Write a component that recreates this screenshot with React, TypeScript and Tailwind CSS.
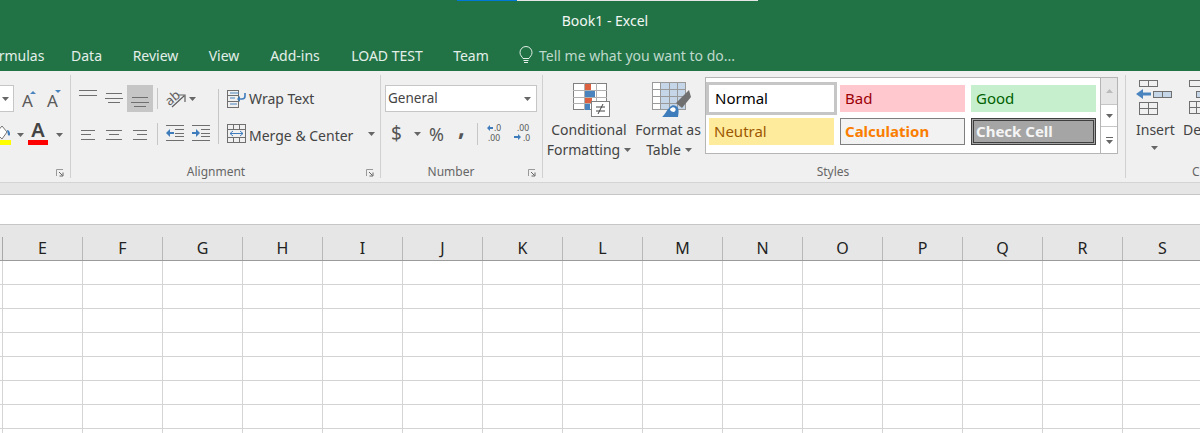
const tabs = [
  { label: 'Formulas', className: 'ml-[-17px] w-[59px]' },
  { label: 'Data', className: 'ml-[29px] w-[31px]' },
  { label: 'Review', className: 'ml-[30px] w-[47px]' },
  { label: 'View', className: 'ml-[29px] w-[32px]' },
  { label: 'Add-ins', className: 'ml-[29px] w-[52px]' },
  { label: 'LOAD TEST', className: 'ml-[29px] w-[74px]' },
  { label: 'Team', className: 'ml-[29px] w-[36px]' },
];

const columns = ['E', 'F', 'G', 'H', 'I', 'J', 'K', 'L', 'M', 'N', 'O', 'P', 'Q', 'R', 'S'];
const rows = [1, 2, 3, 4, 5, 6, 7, 8];

function Caret({ className = '' }: { className?: string }) {
  return (
    <svg width="7" height="4" className={`shrink-0 ${className}`}>
      <path d="M0 0h7L3.5 4z" fill="#666" />
    </svg>
  );
}

function Launcher() {
  return (
    <svg width="8" height="8" className="shrink-0">
      <path d="M0.5 7V0.5H7" fill="none" stroke="#999" />
      <path d="M3 3l3.5 3.5M7 3.5V7H3.5" fill="none" stroke="#666" />
    </svg>
  );
}

function Lines({ lines, width = 18, height = 18 }: { lines: number[][]; width?: number; height?: number }) {
  return (
    <svg width={width} height={height} className="shrink-0" shapeRendering="crispEdges">
      {lines.map(([x1, x2, y], i) => (
        <rect key={i} x={x1} y={y} width={x2 - x1} height="1" fill="#6f6f6f" />
      ))}
    </svg>
  );
}

function Separator({ className = '' }: { className?: string }) {
  return <div className={`w-px bg-[#c6c6c6] shrink-0 ${className}`} />;
}

function GrowFont({ up }: { up: boolean }) {
  return (
    <svg width="15" height="20" className="shrink-0 overflow-visible">
      <text x="0" y="18" fontSize="17" fill="#5a5a5a" fontFamily="Noto Sans, sans-serif">A</text>
      {up ? <path d="M8 5l3-3 3 3z" fill="#4a84bf" /> : <path d="M8 1h6l-3 3z" fill="#4a84bf" />}
    </svg>
  );
}

function Orientation() {
  return (
    <svg width="20" height="20" className="shrink-0 overflow-visible">
      <text x="-1" y="13" fontSize="13" fill="#5f5f5f" transform="rotate(-40 7 9)" fontFamily="Noto Sans, sans-serif">ab</text>
      <path d="M6 18L18 7M12 6h7v7" fill="none" stroke="#5f5f5f" strokeWidth="1.2" />
    </svg>
  );
}

function Indent({ right }: { right: boolean }) {
  return (
    <svg width="18" height="17" className="shrink-0">
      <g shapeRendering="crispEdges" fill="#6f6f6f">
        <rect x="0" y="0" width="18" height="1" />
        <rect x="0" y="15" width="18" height="1" />
        <rect x="9" y="4" width="9" height="1" />
        <rect x="9" y="8" width="9" height="1" />
        <rect x="9" y="11" width="9" height="1" />
      </g>
      {right ? (
        <path d="M0 7h4V4l4 4-4 4V9H0z" fill="#3f7cbc" />
      ) : (
        <path d="M8 7H4V4L0 8l4 4V9h4z" fill="#3f7cbc" />
      )}
    </svg>
  );
}

function WrapIcon() {
  return (
    <svg width="20" height="18" className="shrink-0">
      <g fill="none" stroke="#6f6f6f" shapeRendering="crispEdges">
        <rect x="0.5" y="0.5" width="11" height="5" />
        <rect x="0.5" y="5.5" width="11" height="6" />
        <rect x="0.5" y="11.5" width="11" height="6" />
      </g>
      <path d="M3 3h9M3 8h5M3 14h7" stroke="#4a84bf" />
      <path d="M18 3v3a3 3 0 0 1-3 3h-4" fill="none" stroke="#3f7cbc" strokeWidth="1.6" />
      <path d="M13 6l-3 3 3 3z" fill="#3f7cbc" />
    </svg>
  );
}

function MergeIcon() {
  return (
    <svg width="19" height="19" className="shrink-0">
      <g fill="none" stroke="#6f6f6f" shapeRendering="crispEdges">
        <rect x="0.5" y="0.5" width="18" height="18" />
        <path d="M0 5.5h19M0 13.5h19M6.5 0v5M12.5 0v5M6.5 14v5M12.5 14v5" />
      </g>
      <path d="M3 9.5h13" stroke="#3f7cbc" />
      <path d="M6 7L3 9.5 6 12M13 7l3 2.5-3 2.5" fill="none" stroke="#3f7cbc" />
    </svg>
  );
}

function Decimals({ more }: { more: boolean }) {
  return (
    <svg width="17" height="19" className="shrink-0 overflow-visible">
      <g fontSize="8.5" fill="#555" fontFamily="Noto Sans, sans-serif">
        {more ? (
          <>
            <text x="7" y="7">.0</text>
            <text x="1" y="17">.00</text>
            <path d="M6 3H3V1L0 4l3 3V5h3z" fill="#3f7cbc" />
          </>
        ) : (
          <>
            <text x="4" y="7">.00</text>
            <text x="10" y="17">.0</text>
            <path d="M1 12h4v-2l3 3-3 3v-2H1z" fill="#3f7cbc" />
          </>
        )}
      </g>
    </svg>
  );
}

function ConditionalIcon() {
  return (
    <svg width="38" height="35" className="shrink-0">
      <rect x="0.5" y="0.5" width="33" height="26" fill="#fff" stroke="#808080" />
      <rect x="11" y="1" width="7" height="6" fill="#dc6141" />
      <rect x="11" y="8" width="11" height="6" fill="#4a84bf" />
      <rect x="11" y="14" width="8" height="6" fill="#dc6141" />
      <rect x="11" y="21" width="6" height="6" fill="#4a84bf" />
      <path d="M0 7.5h34M0 14h34M0 20.5h34M11 0v27M23.5 0v27" stroke="#b0b0b0" shapeRendering="crispEdges" />
      <rect x="18.5" y="18.5" width="18" height="15" fill="#fff" stroke="#808080" />
      <path d="M23 24h9M23 28h9M30 21l-5 10" stroke="#444" fill="none" />
    </svg>
  );
}

function FormatTableIcon() {
  return (
    <svg width="40" height="36" className="shrink-0">
      <rect x="0.5" y="0.5" width="33" height="27" fill="#fff" />
      <rect x="8" y="7" width="25" height="21" fill="#c5d6e9" />
      <rect x="8" y="1" width="25" height="6" fill="#c5d6e9" />
      <path d="M0.5 0.5h33v27h-33zM0 7.5h34M0 14h34M0 21h34M8.5 0v28M17 0v28M25.5 0v28" fill="none" stroke="#999" shapeRendering="crispEdges" />
      <path d="M37 8l2 7-9 11-6-5z" fill="#707070" />
      <path d="M10 35c2-1 4-6 8-10 2-2 4-2 6-1 3 1.500 3 5 2 11z" fill="#3f7cbc" />
      <path d="M18 27c2-2 4-2 5-1s1 3-1 4c-2 0-4-1-4-3z" fill="#fff" />
    </svg>
  );
}

function InsertIcon() {
  return (
    <svg width="37" height="36" className="shrink-0">
      <g fill="none" stroke="#6f6f6f" shapeRendering="crispEdges">
        <path d="M3.5 0.5h18v6h-18zM12.5 0v7" />
        <path d="M17.5 11.5h18v6h-18zM26.5 11v7" fill="#c5d6e9" />
        <path d="M3.5 22.5h18v12h-18zM12.5 22v12M3 28.5h19" />
      </g>
      <path d="M15 12.5H7V9L0 14l7 5v-3.500h8z" fill="#4a84bf" />
    </svg>
  );
}

function DeleteIcon() {
  return (
    <svg width="11" height="36" className="shrink-0">
      <g fill="none" stroke="#6f6f6f" shapeRendering="crispEdges">
        <path d="M0.5 0.5h14v6h-14z" />
        <path d="M7.500 11.500h10v6h-10z" fill="#c5d6e9" />
        <path d="M0.5 21.5h14v12h-14zM7.500 21v12M0 27.500h15" />
      </g>
    </svg>
  );
}

function Bucket() {
  return (
    <div className="flex flex-col w-[11px] shrink-0">
      <svg width="11" height="15" className="shrink-0">
        <path d="M-4 8l6-7 5 6-5 7z" fill="#fff" stroke="#777" />
        <path d="M7 5c2 0 3 2 3 4s-1 2-2 1z" fill="#3f7cbc" />
      </svg>
      <div className="h-[5px] bg-[#ffff00]" />
    </div>
  );
}

function GroupLabel({ children, launcher = true, center }: { children: string; launcher?: boolean; center: string }) {
  return (
    <div className="mt-auto mb-[-3px] h-[18px] flex items-center relative text-[12px] text-[#666] leading-none">
      <div className={center}>{children}</div>
      {launcher && (
        <div className="absolute right-[6px] top-[6px]">
          <Launcher />
        </div>
      )}
    </div>
  );
}

export default function App() {
  return (
    <div className="w-[1200px] h-[433px] overflow-hidden bg-white font-['Noto_Sans',sans-serif] text-[14px] text-[#444]">
      {/* Title bar + tabs */}
      <div className="h-[71px] bg-[#217346] flex flex-col">
        <div className="flex h-px ml-[457px]">
          <div className="w-[60px] bg-[#0078d7]" />
          <div className="w-[241px] bg-[#e6e6e6]" />
        </div>
        <div className="h-[38px] flex items-center justify-center text-[14px] text-[#f2f7f4] pl-[10px]">Book1 - Excel</div>
        <div className="flex items-center h-[32px] text-[14px] text-[#e4efe9] whitespace-nowrap">
          {tabs.map(t => (
            <div key={t.label} className={`shrink-0 text-center ${t.className}`}>{t.label}</div>
          ))}
          <svg width="14" height="18" className="ml-[30px] shrink-0">
            <path d="M4 12.500C3 10.500 1 9.500 1 6.500a6 6 0 0 1 12 0c0 3-2 4-3 6z" fill="none" stroke="#e4efe9" />
            <path d="M4.500 14.500h5M5 16.500h4" stroke="#e4efe9" />
          </svg>
          <div className="ml-[6px] text-[#bfd9cb]">Tell me what you want to do...</div>
        </div>
      </div>

      {/* Ribbon */}
      <div className="h-[112px] bg-[#f0f0f0] border-b border-[#d4d4d4] flex overflow-hidden">
        {/* Font group (cut off at the left) */}
        <div className="w-[71px] shrink-0 flex flex-col relative my-[4px] border-r border-[#d0d0d0]">
          <div className="flex items-center h-[27px] mt-[10px]">
            <div className="w-[14px] h-[27px] bg-white border border-l-0 border-[#c6c6c6] flex items-center justify-end pr-[4px]">
              <Caret />
            </div>
            <div className="ml-[8px]"><GrowFont up /></div>
            <div className="ml-[10px]"><GrowFont up={false} /></div>
          </div>
          <div className="flex items-end h-[27px] mt-[8px]">
            <div className="mb-[2px]"><Bucket /></div>
            <Caret className="ml-[6px] mb-[10px]" />
            <div className="ml-[4px] w-[20px] flex flex-col items-center shrink-0 mb-[2px]">
              <span className="text-[20px] font-semibold leading-[20px] text-[#444]">A</span>
              <div className="w-[20px] h-[5px] bg-[#ff0000]" />
            </div>
            <Caret className="ml-[8px] mb-[10px]" />
          </div>
          <GroupLabel center="">{''}</GroupLabel>
        </div>

        {/* Alignment */}
        <div className="w-[310px] shrink-0 flex flex-col my-[4px] border-r border-[#d0d0d0]">
          <div className="flex mt-[10px]">
            <div className="flex flex-col w-[147px] shrink-0">
              <div className="flex items-center h-[27px] pl-[8px]">
                <Lines lines={[[0, 18, 0], [0, 18, 5]]} />
                <div className="ml-[8px]">
                  <Lines lines={[[1, 17, 3], [0, 18, 8], [3, 15, 12]]} />
                </div>
                <div className="ml-[4px] w-[26px] h-[27px] bg-[#c6c6c6] flex items-center justify-center">
                  <Lines lines={[[1, 17, 7], [0, 18, 12], [3, 15, 16]]} />
                </div>
                <Separator className="ml-[4px] h-[21px]" />
                <div className="ml-[8px]"><Orientation /></div>
                <Caret className="ml-[3px]" />
              </div>
              <div className="flex items-center h-[27px] mt-[8px] pl-[10px]">
                <Lines width={15} lines={[[0, 14, 5], [0, 10, 9], [0, 14, 14]]} />
                <div className="ml-[10px]">
                  <Lines width={16} lines={[[0, 16, 5], [3, 13, 9], [0, 16, 14]]} />
                </div>
                <div className="ml-[11px]">
                  <Lines width={14} lines={[[0, 14, 5], [4, 14, 9], [0, 14, 14]]} />
                </div>
                <Separator className="ml-[10px] h-[22px]" />
                <div className="ml-[8px]"><Indent right={false} /></div>
                <div className="ml-[8px]"><Indent right /></div>
              </div>
            </div>
            <Separator className="h-[55px] mt-[4px]" />
            <div className="flex flex-col pl-[8px]">
              <div className="flex items-center h-[27px]">
                <WrapIcon />
                <span className="ml-[2px]">Wrap Text</span>
              </div>
              <div className="flex items-center h-[27px] mt-[8px]">
                <MergeIcon />
                <span className="ml-[3px] w-[119px] pt-[3px] whitespace-nowrap">Merge &amp; Center</span>
                <Caret />
              </div>
            </div>
          </div>
          <GroupLabel center="w-full text-center pr-[19px]">Alignment</GroupLabel>
        </div>

        {/* Number */}
        <div className="w-[162px] shrink-0 flex flex-col my-[4px] border-r border-[#d0d0d0] pl-[4px]">
          <div className="w-[152px] h-[27px] mt-[10px] bg-white border border-[#c6c6c6] flex items-center justify-between pl-[2px] pr-[5px] text-[13.5px]">
            <span>General</span>
            <Caret />
          </div>
          <div className="flex items-center h-[27px] mt-[8px] pl-[6px]">
            <span className="w-[12px] text-[19px] leading-none text-[#555]">$</span>
            <Caret className="ml-[11px]" />
            <span className="ml-[8px] w-[16px] text-[18px] leading-none text-[#555]">%</span>
            <span className="ml-[13px] w-[9px] text-[24px] font-bold leading-[14px] mb-[14px] text-[#555]">,</span>
            <Separator className="ml-[10px] h-[22px]" />
            <div className="ml-[9px]"><Decimals more /></div>
            <div className="ml-[9px]"><Decimals more={false} /></div>
          </div>
          <GroupLabel center="w-full text-center pr-[25px]">Number</GroupLabel>
        </div>

        {/* Styles */}
        <div className="w-[583px] shrink-0 flex flex-col my-[4px] border-r border-[#d0d0d0]">
          <div className="flex mt-[2px]">
            <div className="w-[92px] shrink-0 flex flex-col items-center pt-[6px] leading-[20px] whitespace-nowrap">
              <div className="w-full pl-[30px]"><ConditionalIcon /></div>
              <div className="mt-[2px]">Conditional</div>
              <div className="flex items-center">Formatting<Caret className="ml-[4px]" /></div>
            </div>
            <div className="w-[70px] shrink-0 flex flex-col items-center pt-[5px] leading-[20px] whitespace-nowrap">
              <div className="w-full pl-[17px]"><FormatTableIcon /></div>
              <div className="mt-[2px] -ml-[4px]">Format as</div>
              <div className="flex items-center -ml-[2px]">Table<Caret className="ml-[4px]" /></div>
            </div>
            <div className="flex h-[77px]">
              <div className="w-[396px] border border-[#b5b5b5] bg-white pl-[3px] pt-[7px] grid grid-cols-[125px_125px_125px] grid-rows-[27px_27px] gap-[6px] text-[15px]">
                <div className="outline-[3px] outline-[#c6c6c6] flex items-center pl-[6px] text-black">Normal</div>
                <div className="bg-[#ffc7ce] flex items-center pl-[5px] text-[#9c0006]">Bad</div>
                <div className="bg-[#c6efce] flex items-center pl-[5px] text-[#006100]">Good</div>
                <div className="bg-[#ffeb9c] flex items-center pl-[5px] text-[#9c5700]">Neutral</div>
                <div className="bg-[#f2f2f2] border border-[#7f7f7f] flex items-center pl-[4px] font-bold text-[#fa7d00]">Calculation</div>
                <div className="bg-[#a5a5a5] border-[3px] border-double border-[#3f3f3f] flex items-center pl-[2px] font-bold text-[#f5f5f5]">Check Cell</div>
              </div>
              <div className="w-[17px] flex flex-col border border-l-0 border-[#b5b5b5]">
                <div className="h-[26px] bg-[#e6e6e6] flex items-center justify-center">
                  <svg width="7" height="4"><path d="M0 4h7L3.500 0z" fill="#bbb" /></svg>
                </div>
                <div className="h-[23px] bg-white border-y border-[#c6c6c6] flex items-center justify-center"><Caret /></div>
                <div className="flex-1 bg-white flex flex-col items-center justify-center gap-[2px]">
                  <div className="w-[7px] h-px bg-[#666]" />
                  <Caret />
                </div>
              </div>
            </div>
          </div>
          <GroupLabel center="w-full text-center pr-[2px]" launcher={false}>Styles</GroupLabel>
        </div>

        {/* Cells (cut off at the right) */}
        <div className="flex-1 flex flex-col my-[4px]">
          <div className="flex mt-[5px] pl-[10px]">
            <div className="w-[53px] shrink-0 flex flex-col">
              <InsertIcon />
              <div className="mt-[4px] leading-[20px]">Insert</div>
              <Caret className="mt-[6px] ml-[15px]" />
            </div>
            <div className="shrink-0 flex flex-col overflow-hidden w-[17px] -ml-[6px]">
              <div className="pl-[6px]"><DeleteIcon /></div>
              <div className="mt-[4px] leading-[20px]">Delete</div>
            </div>
          </div>
          <GroupLabel center="pl-[66px]" launcher={false}>C</GroupLabel>
        </div>
      </div>

      {/* Gap band */}
      <div className="h-[12px] bg-[#e6e6e6] border-b border-[#c6c6c6]" />
      {/* Formula bar */}
      <div className="h-[30px] bg-white border-b border-[#c6c6c6]" />

      {/* Column headers */}
      <div className="h-[36px] bg-[#e6e6e6] border-b border-[#9b9b9b] flex items-end text-[16px] text-[#222]">
        <div className="w-[3px] h-[23px] shrink-0 border-r border-[#a8a8a8]" />
        {columns.map(c => (
          <div key={c} className="w-[80px] h-[23px] shrink-0 border-r border-[#b8b8b8] flex items-center justify-center leading-none pb-[2px]">{c}</div>
        ))}
      </div>

      {/* Cells */}
      {rows.map(r => (
        <div key={r} className="h-[24px] flex border-b border-[#d4d4d4]">
          <div className="w-[3px] shrink-0 border-r border-[#d4d4d4]" />
          {columns.map(c => (
            <div key={c} className="w-[80px] shrink-0 border-r border-[#d4d4d4]" />
          ))}
        </div>
      ))}
    </div>
  );
}
